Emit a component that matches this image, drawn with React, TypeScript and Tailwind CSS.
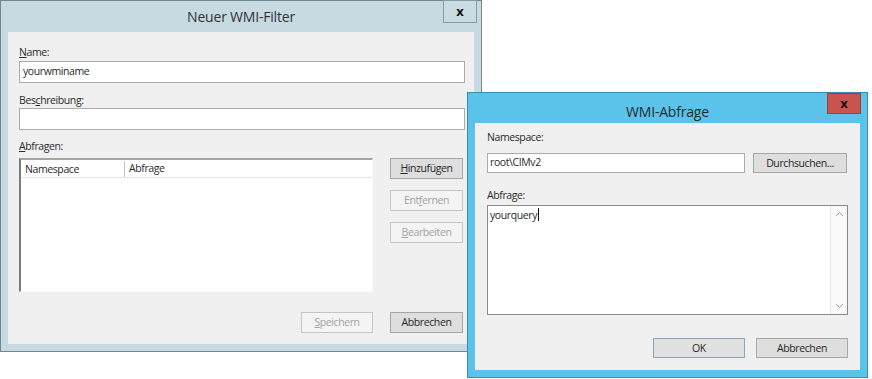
import type { ReactNode } from 'react'

function WinButton({
  children,
  disabled,
  isDefault,
  className = '',
}: {
  children: ReactNode
  disabled?: boolean
  isDefault?: boolean
  className?: string
}) {
  const look = disabled
    ? 'border-[#c5c5c5] bg-[#f4f4f4] text-[#a2a2a2]'
    : isDefault
      ? 'border-[#8fa3b8] bg-[#e1e1e1] text-[#262626]'
      : 'border-[#a6a6a6] bg-[#dedede] text-[#262626]'
  return (
    <div className={`flex shrink-0 items-center justify-center border text-[10.5px] leading-none tracking-[-0.4px] ${look} ${className}`}>
      {children}
    </div>
  )
}

function Label({ children, className = '' }: { children: ReactNode; className?: string }) {
  return (
    <div className={`h-[14px] text-[10.5px] leading-[14px] tracking-[-0.4px] text-[#2a2a2a] ${className}`}>
      {children}
    </div>
  )
}

function NewFilterDialog() {
  return (
    <div className="absolute left-0 top-0 flex h-[352px] w-[482px] flex-col border border-[#76858c] bg-[#c7dae1]">
      <div className="relative flex h-[31px] shrink-0 justify-center pt-[7px]">
        <span className="text-[14px] leading-[18px] tracking-[-0.2px] text-[#333]">Neuer WMI-Filter</span>
        <div className="absolute right-[4px] top-[-1px] flex h-[23px] w-[34px] items-center justify-center border border-[#8d9ca2] bg-[#c9dce3] text-[13px] font-bold leading-none text-[#111]">
          x
        </div>
      </div>
      <div className="mx-[7px] mb-[7px] flex flex-1 flex-col bg-[#f0f0f0] pl-[11px] pt-[13px]">
        <Label>
          <u>N</u>ame:
        </Label>
        <div className="mt-[2px] flex h-[22px] w-[446px] items-center border border-[#ababab] bg-white pl-[3px] text-[10.5px] tracking-[-0.4px] text-[#2a2a2a]">
          yourwminame
        </div>
        <Label className="mt-[10px]">
          Bes<u>c</u>hreibung:
        </Label>
        <div className="mt-[1px] h-[22px] w-[446px] border border-[#ababab] bg-white" />
        <Label className="mt-[9px]">
          <u>A</u>bfragen:
        </Label>
        <div className="mt-[5px] flex">
          <div className="flex h-[134px] w-[354px] flex-col border-l-2 border-t-2 border-r border-b border-l-[#7c7c7c] border-t-[#a4a4a4] border-r-[#f7f7f7] border-b-[#f7f7f7] bg-white">
            <div className="flex h-[18px] items-center border-b border-[#e3e3e3] text-[10.5px] tracking-[-0.4px] text-[#2a2a2a]">
              <div className="w-[104px] border-r border-[#c8c8c8] pl-[4px] leading-[16px]">Namespace</div>
              <div className="pl-[4px]">Abfrage</div>
            </div>
          </div>
          <div className="ml-[17px] flex flex-col gap-[11px]">
            <WinButton className="h-[21px] w-[73px]">
              <u>H</u>inzufügen
            </WinButton>
            <WinButton disabled className="h-[21px] w-[73px]">
              Ent<u>f</u>ernen
            </WinButton>
            <WinButton disabled className="h-[21px] w-[73px]">
              <u>B</u>earbeiten
            </WinButton>
          </div>
        </div>
        <div className="mt-[20px] flex justify-end gap-[17px] pr-[11px]">
          <WinButton disabled className="h-[21px] w-[72px]">
            <u>S</u>peichern
          </WinButton>
          <WinButton className="h-[21px] w-[73px]">Abbrechen</WinButton>
        </div>
      </div>
    </div>
  )
}

function QueryDialog() {
  return (
    <div className="absolute left-[467px] top-[92px] flex h-[286px] w-[401px] flex-col border border-[#3a8bb3] bg-[#5bc3ea]">
      <div className="relative flex h-[30px] shrink-0 justify-center pt-[10px]">
        <span className="text-[14px] leading-[18px] tracking-[-0.2px] text-[#1f2b33]">WMI-Abfrage</span>
        <div className="absolute left-[359px] top-[0px] flex h-[21px] w-[34px] items-center justify-center border border-[#9b4040] bg-[#c9544f] text-[13px] font-bold leading-none text-[#111]">
          x
        </div>
      </div>
      <div className="mx-[7px] mb-[7px] flex flex-1 flex-col bg-[#f0f0f0] pl-[12px] pt-[7px]">
        <Label>Namespace:</Label>
        <div className="mt-[9px] flex items-center">
          <div className="flex h-[20px] w-[258px] items-center border border-[#ababab] bg-white pl-[2px] text-[10.5px] tracking-[-0.4px] text-[#2a2a2a]">
            root\CIMv2
          </div>
          <WinButton className="ml-[8px] h-[20px] w-[94px]">Durchsuchen...</WinButton>
        </div>
        <Label className="mt-[15px]">Abfrage:</Label>
        <div className="mt-[3px] flex h-[110px] w-[361px] border border-[#8a8a8a] bg-white">
          <div className="flex flex-1 items-start pl-[2px] pt-[2px] text-[10.5px] leading-[14px] tracking-[-0.4px] text-[#2a2a2a]">
            yourquery
            <span className="ml-[1px] inline-block h-[13px] w-[1px] bg-[#111]" />
          </div>
          <div className="flex w-[17px] flex-col justify-between border-l border-[#e6e6e6] bg-[#fafafa] text-[#9a9a9a]">
            <svg width="17" height="17" viewBox="0 0 17 17" fill="none" stroke="currentColor" strokeWidth="1">
              <path d="M5 10 L8.5 6.5 L12 10" />
            </svg>
            <svg width="17" height="17" viewBox="0 0 17 17" fill="none" stroke="currentColor" strokeWidth="1">
              <path d="M5 7 L8.5 10.5 L12 7" />
            </svg>
          </div>
        </div>
        <div className="mt-[23px] flex justify-end gap-[11px] pr-[12px]">
          <WinButton isDefault className="h-[20px] w-[92px]">OK</WinButton>
          <WinButton className="h-[20px] w-[92px]">Abbrechen</WinButton>
        </div>
      </div>
    </div>
  )
}

export default function App() {
  return (
    <div className="relative h-[379px] w-[872px] overflow-hidden bg-white font-['Open_Sans',sans-serif]">
      <NewFilterDialog />
      <QueryDialog />
    </div>
  )
}
